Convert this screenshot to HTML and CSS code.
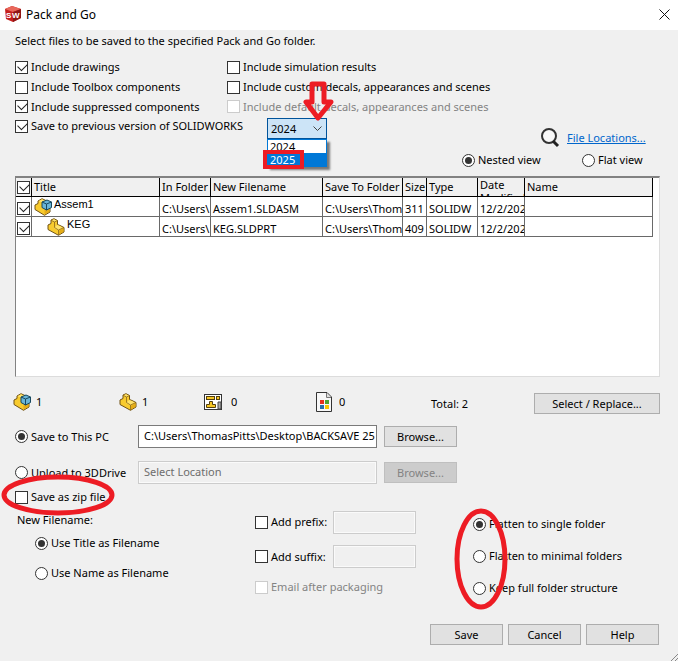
FILE: index.html
```html
<!DOCTYPE html>
<html lang="en">
<head>
    <meta charset="UTF-8">
    <meta name="viewport" content="width=device-width, initial-scale=1.0">
    <title>Pack and Go</title>
    <link rel="stylesheet" href="styles.css">
</head>
<body>
    <svg class="symbols" aria-hidden="true">
        <symbol id="part" viewBox="0 0 18 18">
            <path d="M1 7 L4 5.500 V2 L7 0.700 L10.500 2.500 V6.500 L13 7.500 L17 9.500 V14 L11.500 17.300 L1 11.500 Z" fill="#f8cb2e" stroke="#705214" stroke-linejoin="round"/>
            <path d="M10 7 L13 8 L16 9.800 L11.500 12.300 L7 10 Z M4.500 2.200 L7 1.200 L10 2.700 L7.500 4 Z" fill="#ffe36b"/>
            <path d="M12 12.800 L16.500 10.300 V13.800 L12 16.500 Z" fill="#e5ac17"/>
            <path d="M4 2.200 L7.500 4 L10.500 2.500 M7.500 4 V9.500 L11.500 12 L17 9.500 M11.500 12 V17" fill="none" stroke="#8b681b" stroke-width="0.800"/>
        </symbol>
        <symbol id="assembly" viewBox="0 0 18 18">
            <path d="M1 7 L4 5.500 V3 L8 0.700 L13 3 L16 9 V14 L10.500 17.300 L1 11.500 Z" fill="#f8cb2e" stroke="#705214" stroke-linejoin="round"/>
            <path d="M4.500 3.200 L8 1.300 L11 2.700 L8 4.500 Z" fill="#ffe36b"/>
            <path d="M10.500 12.500 L15.500 10.500 V13.700 L10.500 16.500 Z" fill="#e5ac17"/>
            <path d="M8 4 L13 2 L17.500 4 V9.500 L12.500 12 L8 9.500 Z" fill="#69b5d8" stroke="#17485f" stroke-linejoin="round"/>
            <path d="M8 4 L12.500 6 L17.500 4 M12.500 6 V12" fill="none" stroke="#17485f"/>
        </symbol>
    </svg>
    <header class="titlebar">
        <svg class="app-logo" viewBox="0 0 16 16" aria-hidden="true">
            <path d="M0 3 L7 0 L16 3 V12 L8 16 L1 13 Z" fill="#c51f1e"/>
            <path d="M0 3 L7 0 L16 3 L8 6 Z" fill="#e9685b"/>
            <path d="M8 6 L16 3 V12 L8 16 Z" fill="#8f1615"/>
            <text x="1" y="12" class="logo-letter">S</text>
            <text x="7" y="12" class="logo-letter">W</text>
        </svg>
        <h1>Pack and Go</h1>
        <button class="close" type="button" aria-label="Close">
            <svg viewBox="0 0 11 11"><path d="M0.500 0.500 L10.500 10.500 M10.500 0.500 L0.500 10.500" stroke="#111"/></svg>
        </button>
    </header>

    <form class="dialog">
        <p class="intro">Select files to be saved to the specified Pack and Go folder.</p>

        <section class="options">
            <label><input type="checkbox" checked>Include drawings</label>
            <label><input type="checkbox">Include simulation results</label>
            <label><input type="checkbox">Include Toolbox components</label>
            <label><input type="checkbox">Include custom decals, appearances and scenes</label>
            <label><input type="checkbox" checked>Include suppressed components</label>
            <label class="disabled"><input type="checkbox" disabled>Include default decals, appearances and scenes</label>
            <label><input type="checkbox" checked>Save to previous version of SOLIDWORKS</label>
            <div class="version">
                <select aria-label="SOLIDWORKS version">
                    <option selected>2024</option>
                    <option>2025</option>
                </select>
                <svg class="chevron" viewBox="0 0 9 6"><path d="M0.500 0.500 L4.500 4.500 L8.500 0.500" fill="none" stroke="#444"/></svg>
                <ul class="version-list">
                    <li>2024</li>
                    <li class="active">2025</li>
                </ul>
                <span class="mark-box"></span>
                <svg class="mark mark-arrow" viewBox="0 0 34 42" aria-hidden="true">
                    <path d="M11 4 H23 V22 H30 L17 38 L5 22 H11 Z"/>
                </svg>
            </div>
            <div class="view">
                <div class="locations">
                    <svg class="magnifier" viewBox="0 0 19 20" aria-hidden="true">
                        <circle cx="8" cy="8" r="7" fill="#f8f8f8" stroke="#333" stroke-width="2"/>
                        <path d="M12 13 L17 18" stroke="#222" stroke-width="3"/>
                    </svg>
                    <a href="#">File Locations...</a>
                </div>
                <div class="view-modes">
                    <label><input type="radio" name="view" checked>Nested view</label>
                    <label><input type="radio" name="view">Flat view</label>
                </div>
            </div>
        </section>

        <div class="files">
            <table>
                <colgroup>
                    <col class="c-check"><col class="c-title"><col class="c-folder"><col class="c-filename"><col class="c-save"><col class="c-size"><col class="c-type"><col class="c-date"><col>
                </colgroup>
                <thead>
                    <tr>
                        <th><input type="checkbox" aria-label="Select all" checked></th>
                        <th>Title</th>
                        <th>In Folder</th>
                        <th>New Filename</th>
                        <th>Save To Folder</th>
                        <th>Size</th>
                        <th>Type</th>
                        <th class="wrap"><div>Date Modified</div></th>
                        <th>Name</th>
                    </tr>
                </thead>
                <tbody>
                    <tr>
                        <td><input type="checkbox" aria-label="Assem1" checked></td>
                        <td class="name"><div><svg class="icon"><use href="#assembly"/></svg><span>Assem1</span></div></td>
                        <td>C:\Users\</td>
                        <td>Assem1.SLDASM</td>
                        <td>C:\Users\Thom</td>
                        <td>311</td>
                        <td>SOLIDW</td>
                        <td>12/2/202</td>
                        <td></td>
                    </tr>
                    <tr>
                        <td><input type="checkbox" aria-label="KEG" checked></td>
                        <td class="name child"><div><svg class="icon"><use href="#part"/></svg><span>KEG</span></div></td>
                        <td>C:\Users\</td>
                        <td>KEG.SLDPRT</td>
                        <td>C:\Users\Thom</td>
                        <td>409</td>
                        <td>SOLIDW</td>
                        <td>12/2/202</td>
                        <td></td>
                    </tr>
                </tbody>
            </table>
        </div>

        <section class="summary">
            <span><svg class="icon"><use href="#assembly"/></svg>1</span>
            <span><svg class="icon"><use href="#part"/></svg>1</span>
            <span class="wide">
                <svg class="icon" viewBox="0 0 18 18" aria-hidden="true">
                    <rect x="0.500" y="1.500" width="17" height="15" fill="#fff" stroke="#333"/>
                    <rect x="2.500" y="3.500" width="8" height="3" fill="#f6c624" stroke="#54400c"/>
                    <rect x="12.500" y="3.500" width="3" height="3" fill="#f6c624" stroke="#54400c"/>
                    <path d="M5.500 8.500 H8.500 V11.500 H11.500 V14.500 H2.500 V11.500 H5.500 Z" fill="#f6c624" stroke="#54400c"/>
                    <path d="M14 9 H17 V16 H14 Z" fill="#aaa" stroke="#444"/>
                </svg>0
            </span>
            <span class="document">
                <svg class="icon icon-doc" viewBox="0 0 16 20" aria-hidden="true">
                    <path d="M0.500 0.500 H11 L15.500 5 V19.500 H0.500 Z" fill="#f7f7f7" stroke="#333"/>
                    <path d="M10.500 1 V5.500 H15" fill="#ddd" stroke="#777"/>
                    <rect x="4" y="8" width="4" height="4" fill="#e6301b"/>
                    <rect x="9" y="8" width="4" height="4" fill="#4ca22f"/>
                    <rect x="4" y="13" width="4" height="4" fill="#286fa8"/>
                    <rect x="9" y="13" width="4" height="4" fill="#f7c600"/>
                </svg>0
            </span>
            <span class="total">Total: 2</span>
            <button class="btn" type="button">Select / Replace...</button>
        </section>

        <section class="target">
            <label><input type="radio" name="target" checked>Save to This PC</label>
            <input type="text" aria-label="Folder" value="C:\Users\ThomasPitts\Desktop\BACKSAVE 25">
            <button class="btn" type="button">Browse...</button>
            <label><input type="radio" name="target">Upload to 3DDrive</label>
            <input type="text" aria-label="3DDrive location" value="Select Location" disabled>
            <button class="btn" type="button" disabled>Browse...</button>
        </section>

        <div class="zip">
            <label><input type="checkbox">Save as zip file</label>
            <svg class="mark mark-zip" viewBox="0 0 114 42" aria-hidden="true">
                <ellipse cx="57" cy="21" rx="54" ry="18"/>
            </svg>
        </div>

        <section class="naming">
            <div class="filename">
                <p>New Filename:</p>
                <label><input type="radio" name="filename" checked>Use Title as Filename</label>
                <label><input type="radio" name="filename">Use Name as Filename</label>
            </div>
            <div class="affixes">
                <label><input type="checkbox">Add prefix:</label>
                <input type="text" aria-label="Prefix" disabled>
                <label><input type="checkbox">Add suffix:</label>
                <input type="text" aria-label="Suffix" disabled>
                <label class="disabled email"><input type="checkbox" disabled>Email after packaging</label>
            </div>
            <div class="folders">
                <label><input type="radio" name="folders" checked>Flatten to single folder</label>
                <label><input type="radio" name="folders">Flatten to minimal folders</label>
                <label><input type="radio" name="folders">Keep full folder structure</label>
                <svg class="mark mark-folders" viewBox="0 0 54 102" aria-hidden="true">
                    <ellipse cx="27" cy="51" rx="24" ry="48"/>
                </svg>
            </div>
        </section>

        <footer class="actions">
            <button class="btn" type="submit">Save</button>
            <button class="btn" type="button">Cancel</button>
            <button class="btn" type="button">Help</button>
        </footer>
    </form>
    <svg class="grip" viewBox="0 0 7 7" aria-hidden="true"><path d="M0 7 L7 0 M4 7 L7 4" stroke="#888"/></svg>
</body>
</html>
```
FILE: styles.css
```css
* {
    box-sizing: border-box;
}

body {
    font-family: "Noto Sans", "Open Sans", sans-serif;
    font-size: 11px;
    line-height: 14px;
    color: #000;
    background-color: #f0f0f0;
    margin: 0;
    min-height: 100vh;
    position: relative;
}

p, h1, ul {
    margin: 0;
    padding: 0;
}

input, select, button {
    font: inherit;
    color: inherit;
    margin: 0;
}

.symbols {
    display: none;
}

.titlebar {
    display: flex;
    align-items: center;
    height: 30px;
    padding: 0 8px 2px 5px;
    background: white;
}

.titlebar h1 {
    flex: 1;
    margin-left: 5px;
    padding-top: 2px;
    font-size: 12px;
    font-weight: normal;
}

.app-logo {
    width: 16px;
    height: 16px;
}

.logo-letter {
    font: bold 8px "Liberation Sans", sans-serif;
    fill: white;
}

.close {
    width: 11px;
    height: 11px;
    padding: 0;
    border: none;
    background: none;
}

.close svg {
    display: block;
}

.dialog {
    padding: 4px 18px 16px 15px;
}

label {
    display: flex;
    align-items: center;
    gap: 3px;
    white-space: nowrap;
}

.disabled {
    color: #838383;
}

input[type="checkbox"],
input[type="radio"] {
    appearance: none;
    flex: none;
    position: relative;
    width: 13px;
    height: 13px;
    border: 1px solid #333;
    background: white;
}

input[type="radio"] {
    border-radius: 50%;
}

input[type="checkbox"]:disabled {
    border-color: #ccc;
}

input[type="checkbox"]:checked::after {
    content: "";
    position: absolute;
    left: 2px;
    top: 1px;
    width: 8px;
    height: 5px;
    border-left: 1px solid #222;
    border-bottom: 1px solid #222;
    transform: rotate(-45deg);
}

input[type="radio"]:checked::after {
    content: "";
    position: absolute;
    left: 2px;
    top: 2px;
    width: 7px;
    height: 7px;
    border-radius: 50%;
    background: #333;
}

input[type="text"] {
    width: 100%;
    height: 23px;
    padding: 0 0 2px 5px;
    border: 1px solid #7a7a7a;
    background: white;
}

input[type="text"]:disabled {
    border-color: #ccc;
    background: #f0f0f0;
    box-shadow: inset 0 0 0 1px #fafafa;
    color: #6d6d6d;
}

.btn {
    width: 73px;
    height: 21px;
    padding: 0;
    border: 1px solid #adadad;
    background: #e1e1e1;
}

.btn:disabled {
    border-color: #bfbfbf;
    background: #ccc;
    color: #838383;
}

.options {
    display: grid;
    grid-template-columns: 212px 235px 1fr;
    grid-template-rows: 20px 20px 19px 20px 33px;
    margin-top: 9px;
}

.options > label:nth-of-type(odd) {
    grid-column: 1;
}

.version {
    position: relative;
    width: 60px;
    height: 21px;
    margin: 2px 0 0 40px;
}

.version select {
    appearance: none;
    width: 100%;
    height: 21px;
    padding: 0 3px;
    border: 1px solid #00539b;
    border-radius: 0;
    background: #cce4f7;
}

.chevron {
    position: absolute;
    right: 5px;
    top: 8px;
    width: 9px;
    height: 6px;
}

.version-list {
    position: absolute;
    top: 21px;
    left: 0;
    width: 60px;
    border: 1px solid #0078d7;
    background: white;
    box-shadow: 3px 3px 2px rgba(0, 0, 0, 0.5);
    list-style: none;
}

.version-list li {
    height: 13px;
    padding: 0 2px;
    line-height: 13px;
}

.version-list .active {
    background: #0078d7;
    color: white;
}

.mark-box {
    position: absolute;
    top: 32px;
    left: -4px;
    width: 41px;
    height: 19px;
    border: 4px solid #ed1c24;
}

.mark {
    position: absolute;
    fill: none;
    stroke: #ed1c24;
    stroke-width: 5;
    stroke-linejoin: round;
    pointer-events: none;
}

.mark-arrow {
    left: 34px;
    top: -38px;
    width: 34px;
    height: 42px;
}

.view {
    grid-column: 3;
    grid-row: 1 / -1;
    align-self: end;
}

.locations {
    display: flex;
    align-items: center;
    gap: 7px;
    padding-left: 79px;
}

.magnifier {
    width: 19px;
    height: 20px;
}

.locations a {
    color: #0066cc;
}

.view-modes {
    display: grid;
    grid-template-columns: 120px 1fr;
    margin: 5px 0 2px;
}

.files {
    height: 201px;
    margin: 7px 0 13px;
    padding-right: 6px;
    border: 1px solid #dcdcdc;
    border-top: 2px solid #828282;
    border-left: 1px solid #828282;
    background: white;
}

table {
    width: 100%;
    table-layout: fixed;
    border-collapse: separate;
    border-spacing: 0;
}

.c-check { width: 16px; }
.c-title { width: 128px; }
.c-folder { width: 51px; }
.c-filename { width: 112px; }
.c-save { width: 80px; }
.c-size { width: 24px; }
.c-type { width: 51px; }
.c-date { width: 47px; }

th, td {
    height: 20px;
    padding: 0 0 0 2px;
    border-right: 1px solid #696969;
    border-bottom: 1px solid #696969;
    font-weight: normal;
    text-align: left;
    white-space: nowrap;
    overflow: hidden;
}

th {
    height: 19px;
    border-right-color: #000;
    border-bottom: 1px solid #000;
    background: #f0f0f0;
}

td {
    padding-top: 4px;
}

th:first-child,
td:first-child {
    padding-left: 1px;
}

th input[type="checkbox"],
td input[type="checkbox"] {
    display: block;
}

th.wrap {
    white-space: normal;
}

th.wrap div {
    height: 18px;
    line-height: 13px;
    overflow: hidden;
}

td.name {
    padding-top: 0;
    font-family: "Liberation Sans", Arial, sans-serif;
}

td.name div {
    display: flex;
    gap: 2px;
}

td.name span {
    line-height: 12px;
}

td.child {
    padding-left: 15px;
}

.icon {
    flex: none;
    width: 18px;
    height: 18px;
}

.icon-doc {
    width: 16px;
    height: 20px;
}

.summary {
    display: grid;
    grid-template-columns: 106px 85px 112px 115px 1fr auto;
    align-items: center;
    height: 24px;
    margin-left: -2px;
}

.summary span {
    display: flex;
    align-items: center;
    gap: 5px;
}

.summary .wide {
    gap: 9px;
}

.summary .document {
    gap: 7px;
}

.summary .total,
.summary .btn {
    margin-top: 3px;
}

.summary .btn {
    width: 126px;
}

.target {
    display: grid;
    grid-template-columns: 123px 239px auto;
    justify-content: start;
    align-items: center;
    row-gap: 13px;
    margin-top: 11px;
}

.target .btn {
    margin-left: 7px;
}

.zip {
    position: relative;
    margin-top: 6px;
}

.mark-zip {
    left: -14px;
    top: -16px;
    width: 114px;
    height: 42px;
}

.naming {
    display: grid;
    grid-template-columns: 240px 218px 1fr;
    margin-top: 7px;
}

.filename {
    padding: 2px 0 0 2px;
}

.filename label {
    margin: 9px 0 16px 18px;
}

.affixes {
    display: grid;
    grid-template-columns: 78px 83px;
    grid-template-rows: 22px 23px 14px;
    row-gap: 12px;
    align-content: start;
}

.affixes .email {
    grid-column: 1 / -1;
}

.folders {
    position: relative;
    display: flex;
    flex-direction: column;
    gap: 18px;
    padding-top: 6px;
}

.mark-folders {
    left: -19px;
    top: -3px;
    width: 54px;
    height: 102px;
}

.actions {
    display: flex;
    justify-content: flex-end;
    gap: 5px;
    margin: 28px 1px 0 0;
}

.grip {
    position: absolute;
    right: 0;
    bottom: 0;
    width: 7px;
    height: 7px;
}
```
